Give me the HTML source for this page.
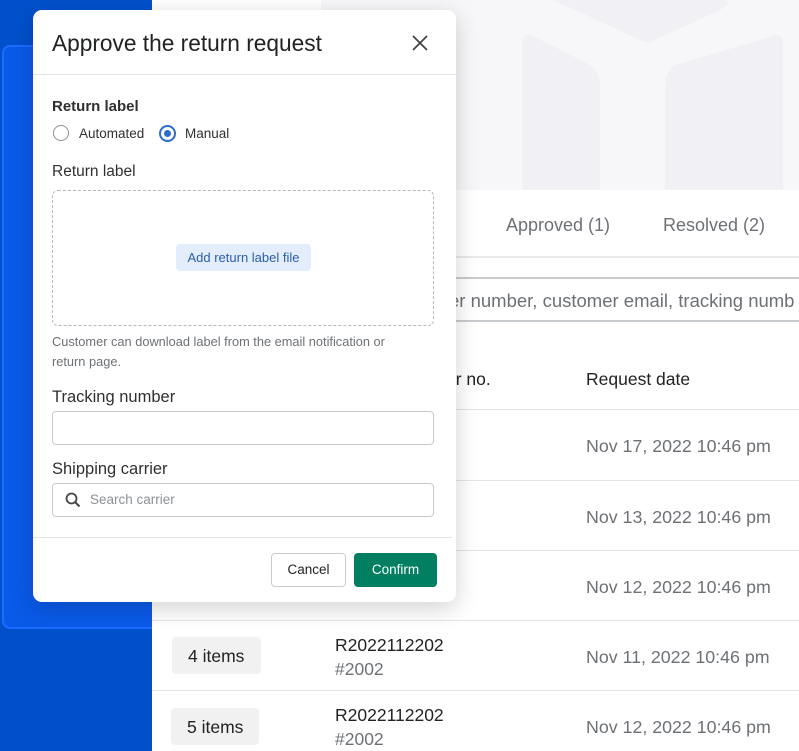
<!DOCTYPE html>
<html><head><style>
*{box-sizing:border-box;margin:0;padding:0}
body{width:799px;height:751px;overflow:hidden;position:relative;background:#fff;font-family:"Liberation Sans",Arial,sans-serif;color:#202223}
.abs{position:absolute}
.t{white-space:nowrap}
</style></head><body>
<div class="abs" style="left:0;top:0;width:321px;height:751px;background:#0050cc"></div>
<div class="abs" style="left:152px;top:0;width:647px;height:751px;background:#fff"></div>
<div class="abs" style="left:321px;top:0;width:478px;height:190px;background:#f7f7f9"></div>
<svg class="abs" style="left:480px;top:0" width="319" height="190" viewBox="0 0 319 190">
<path d="M75 0 L240 0 Q255 0 240 10 L175 40 Q170 45 160 40 L95 10 Q70 0 75 0Z" fill="#f1f1f5"/>
<path d="M42 45 Q42 30 55 37 L110 65 Q120 72 120 85 L120 190 L42 190Z" fill="#f1f1f5"/>
<path d="M185 85 Q185 72 195 65 L290 37 Q303 30 303 45 L303 190 L185 190Z" fill="#f1f1f5"/>
</svg>
<div class="abs" style="left:2px;top:45px;width:160px;height:584px;border:2px solid #1c6dff;border-radius:8px;background:#0a5ae8"></div>
<div class="abs" style="left:152px;top:190px;width:647px;height:561px;background:#fff"></div>
<div class="abs t" style="left:506px;top:215px;font-size:18px;color:#6d7175">Approved (1)</div>
<div class="abs t" style="left:663px;top:215px;font-size:18px;color:#6d7175">Resolved (2)</div>
<div class="abs" style="left:152px;top:256px;width:647px;height:2px;background:#e8e9eb"></div>
<div class="abs" style="left:452px;top:277px;width:347px;height:45px;border-top:2px solid #c9cccf;border-bottom:2px solid #c9cccf"></div>
<div class="abs t" style="left:449px;top:290px;font-size:18.5px;color:#6d7175">er number, customer email, tracking numb</div>
<div class="abs t" style="left:446px;top:369px;font-size:17.5px;color:#202223">er no.</div>
<div class="abs t" style="left:586px;top:369px;font-size:17.5px;color:#202223">Request date</div>
<div class="abs" style="left:152px;top:409px;width:647px;height:1px;background:#e4e5e7"></div>
<div class="abs" style="left:152px;top:480px;width:647px;height:1px;background:#e4e5e7"></div>
<div class="abs" style="left:152px;top:550px;width:647px;height:1px;background:#e4e5e7"></div>
<div class="abs" style="left:152px;top:620px;width:647px;height:1px;background:#e4e5e7"></div>
<div class="abs" style="left:152px;top:690px;width:647px;height:1px;background:#e4e5e7"></div>
<div class="abs t" style="left:586px;top:436px;font-size:17.8px;color:#6d7175">Nov 17, 2022 10:46 pm</div>
<div class="abs t" style="left:586px;top:507px;font-size:17.8px;color:#6d7175">Nov 13, 2022 10:46 pm</div>
<div class="abs t" style="left:586px;top:577px;font-size:17.8px;color:#6d7175">Nov 12, 2022 10:46 pm</div>
<div class="abs t" style="left:586px;top:647px;font-size:17.8px;color:#6d7175">Nov 11, 2022 10:46 pm</div>
<div class="abs t" style="left:586px;top:717px;font-size:17.8px;color:#6d7175">Nov 12, 2022 10:46 pm</div>
<div class="abs t" style="left:172px;top:637px;width:89px;height:37px;background:#f1f1f1;border-radius:4px;font-size:17.5px;line-height:38px;padding-left:16px">4 items</div>
<div class="abs t" style="left:171px;top:708px;width:88px;height:37px;background:#f1f1f1;border-radius:4px;font-size:17.5px;line-height:38px;padding-left:16px">5 items</div>
<div class="abs t" style="left:335px;top:635px;font-size:17.5px">R2022112202</div>
<div class="abs t" style="left:335px;top:659px;font-size:17.5px;color:#6d7175">#2002</div>
<div class="abs t" style="left:335px;top:705px;font-size:17.5px">R2022112202</div>
<div class="abs t" style="left:335px;top:729px;font-size:17.5px;color:#6d7175">#2002</div>

<div class="abs" style="left:33px;top:10px;width:423px;height:592px;background:#fff;border-radius:9px;box-shadow:0 6px 24px rgba(0,0,0,.18)">
<div class="abs t" style="left:19px;top:20px;font-size:22.7px;color:#202223">Approve the return request</div>
<svg class="abs" style="left:378px;top:24px" width="18" height="18" viewBox="0 0 18 18"><path d="M2 2L16 16M16 2L2 16" stroke="#444" stroke-width="1.8"/></svg>
<div class="abs" style="left:0;top:64px;width:423px;height:1px;background:#e1e3e5"></div>
<div class="abs t" style="left:19px;top:88px;font-size:15px;font-weight:bold;color:#303030">Return label</div>
<div class="abs" style="left:20px;top:115px;width:16px;height:16px;border:1.5px solid #8c9196;border-radius:50%"></div>
<div class="abs t" style="left:46px;top:116px;font-size:13.5px;color:#303030">Automated</div>
<div class="abs" style="left:126px;top:115px;width:17px;height:17px;border:2px solid #2c6ecb;border-radius:50%"></div>
<div class="abs" style="left:131px;top:120px;width:7px;height:7px;background:#2c6ecb;border-radius:50%"></div>
<div class="abs t" style="left:152px;top:116px;font-size:13.5px;color:#303030">Manual</div>
<div class="abs t" style="left:19px;top:153px;font-size:15.5px;color:#303030">Return label</div>
<div class="abs" style="left:19px;top:180px;width:382px;height:136px;border:1px dashed #b5b8bb;border-radius:6px"></div>
<div class="abs t" style="left:143px;top:234px;width:135px;height:27px;background:#e3edfc;border-radius:4px;font-size:13px;line-height:27px;text-align:center;color:#2c5faa">Add return label file</div>
<div class="abs" style="left:19px;top:322px;width:362px;font-size:12.8px;line-height:20px;color:#6d7175">Customer can download label from the email notification or return page.</div>
<div class="abs t" style="left:19px;top:378px;font-size:16.5px;color:#303030">Tracking number</div>
<div class="abs" style="left:19px;top:401px;width:382px;height:34px;border:1px solid #c9cccf;border-radius:4px"></div>
<div class="abs t" style="left:19px;top:450px;font-size:16.5px;color:#303030">Shipping carrier</div>
<div class="abs" style="left:19px;top:473px;width:382px;height:34px;border:1px solid #c9cccf;border-radius:4px"></div>
<svg class="abs" style="left:32px;top:482px" width="16" height="16" viewBox="0 0 16 16"><circle cx="6.5" cy="6.5" r="5" fill="none" stroke="#444" stroke-width="1.8"/><path d="M10 10L14.5 14.5" stroke="#444" stroke-width="2"/></svg>
<div class="abs t" style="left:57px;top:482px;font-size:13.5px;color:#8c9196">Search carrier</div>
<div class="abs" style="left:0;top:527px;width:419px;height:1px;background:#e1e3e5"></div>
<div class="abs t" style="left:238px;top:543px;width:75px;height:34px;border:1px solid #c9cccf;border-radius:4px;font-size:13.5px;line-height:32px;text-align:center;color:#202223">Cancel</div>
<div class="abs t" style="left:321px;top:543px;width:83px;height:34px;background:#008060;border-radius:4px;font-size:13.5px;line-height:34px;text-align:center;color:#fff">Confirm</div>
</div>
</body></html>
